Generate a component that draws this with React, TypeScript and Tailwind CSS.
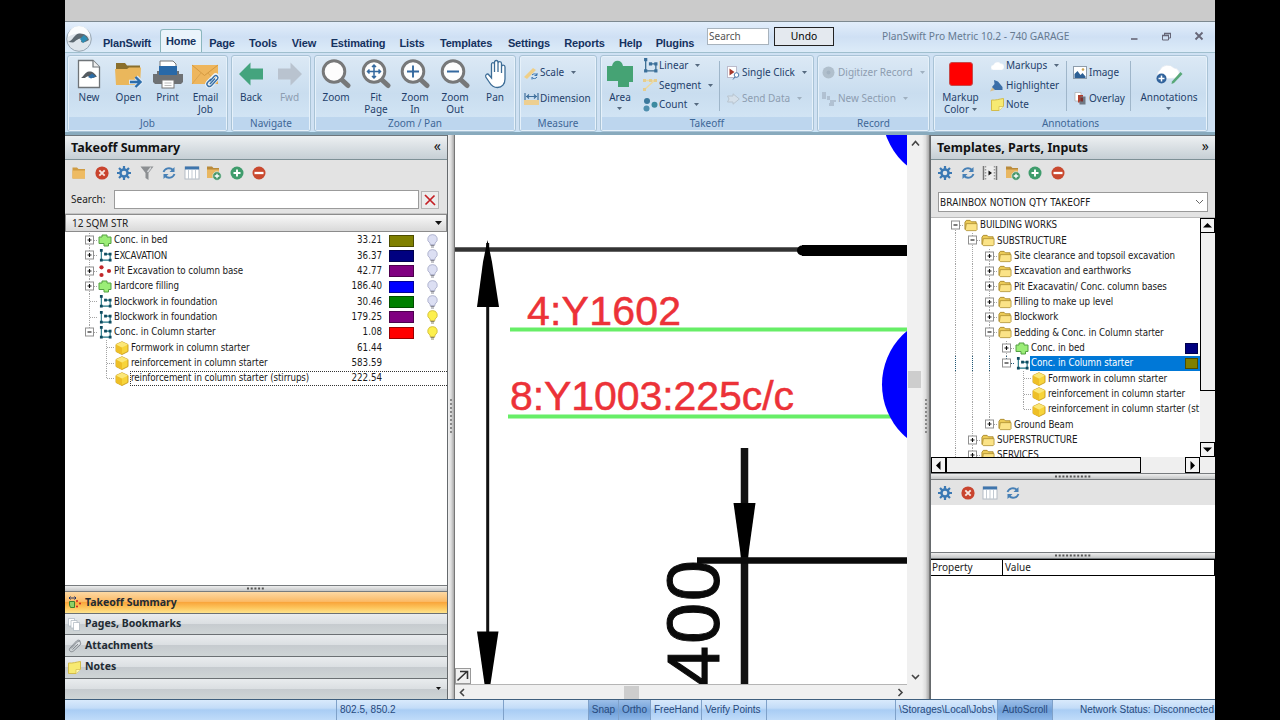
import React from 'react';

type Kids = { children?: React.ReactNode };

/* ---------- ribbon icons ---------- */

const NewIcon = () => (
  <svg width="24" height="30" viewBox="0 0 24 30">
    <path d="M1.500 1.500H16L22.500 8V28.500H1.500Z" fill="#fff" stroke="#6f7478" strokeWidth="1.300" />
    <path d="M16 1.500V8H22.500" fill="#eee" stroke="#6f7478" strokeWidth="1.200" />
    <path d="M4 19C7 17 8 13 12 12.500C16 12 18 15 20 17.500L16 19C13 16.500 10 17 8 19Z" fill="#555b60" />
    <path d="M11 18L15 14.500L19 17.500L14 19.500Z" fill="#2b6ca6" />
  </svg>
);
const OpenIcon = () => (
  <svg width="29" height="29" viewBox="0 0 29 29">
    <path d="M2 3H11L13 5.500H26V11H2Z" fill="#8a6f2c" />
    <path d="M1 9H13L15 7.500H27L26 25H2Z" fill="#eab75c" />
    <path d="M15 22H26M22 17L27 22L22 27" fill="none" stroke="#d8e6f4" strokeWidth="4.500" />
    <path d="M16 22H26M21.500 17L26.500 22L21.500 27" fill="none" stroke="#2c6dab" strokeWidth="2.400" />
  </svg>
);
const PrintIcon = () => (
  <svg width="30" height="29" viewBox="0 0 30 29">
    <path d="M7 1H20L23 4V12H7Z" fill="#fff" stroke="#777" />
    <path d="M0 14H30V22L28 24H2L0 22Z" fill="#6e7174" />
    <path d="M4 11H26V16H4Z" fill="#6e7174" />
    <rect x="6" y="6" width="18" height="9" fill="#2969a8" />
    <rect x="9" y="20" width="12" height="8" fill="#fff" stroke="#777" />
    <path d="M11.500 23H18.500M11.500 25.500H18.500" stroke="#bbb" />
  </svg>
);
const EmailIcon = () => (
  <svg width="29" height="29" viewBox="0 0 29 29">
    <rect x="1" y="5" width="26" height="19" fill="#eeb65d" />
    <path d="M1 5L13.500 15.500L27 5" fill="none" stroke="#d5993f" />
    <path d="M1 24L10 13M27 24L17 13" stroke="#dba450" />
    <path d="M18 21L23.500 15.500C25 14 28 16.500 26.500 18.500L20.500 25.500C18 28 14.500 25 16.500 22.500L22.500 16.500M19 24L24.500 18" fill="none" stroke="#edf4fa" strokeWidth="3.500" />
    <path d="M19 21L23.500 16C25.500 14.500 28 17 26.500 19L20.500 25.500C18 28 14.500 25 16.500 22.500L20 19M19 24L24 18.500" fill="none" stroke="#386fa5" strokeWidth="1.400" />
  </svg>
);
const ArrowIcon = ({ flip }: { flip?: boolean }) => (
  <svg width="26" height="24" viewBox="0 0 26 24">
    {flip ? <path d="M25 12L13.500 0.500V6.500H1V17.500H13.500V23.500Z" fill="#b9c3cf" /> : <path d="M1 12L12.500 0.500V6.500H25V17.500H12.500V23.500Z" fill="#44a47e" />}
  </svg>
);
const Magnifier = ({ children }: Kids) => (
  <svg width="30" height="30" viewBox="0 0 30 30">
    <path d="M20 20L27 26.500" stroke="#777879" strokeWidth="5" strokeLinecap="round" />
    <circle cx="13" cy="12.500" r="10.800" fill="#fdfdfd" stroke="#777879" strokeWidth="2.900" />
    <g stroke="#34699f" strokeWidth="1.900" fill="none">{children}</g>
  </svg>
);
const HandIcon = () => (
  <svg width="25" height="30" viewBox="0 0 25 30">
    <path d="M7.500 17V5.500C7.500 3 10.500 3 10.500 5.500V13V3.500C10.500 .800 14 .800 14 3.500V13V4.500C14 2 17.500 2 17.500 4.500V14V8C17.500 5.500 21 5.500 21 8V20C21 25 18 28.500 13.500 28.500C9.500 28.500 7.500 27 5.500 23.500L1.800 18C1 15.500 3.500 14 5 16L7.500 19Z" transform="translate(1)" fill="#fff" stroke="#3c6c96" strokeWidth="1.300" />
  </svg>
);
const AreaIcon = () => (
  <svg width="28" height="28" viewBox="0 0 28 28">
    <path d="M1 6H6C7 -1 16 -1 17 6H27V22H23V27H12V21H1Z" fill="#45a374" />
  </svg>
);
const ScaleIcon = () => (
  <svg width="15" height="14" viewBox="0 0 15 14">
    <path d="M0 11L9 2L12 4L3 13Z" fill="#efcf88" />
    <path d="M8 9C9 7.500 12 7.500 13 9M13 7V9.500H10.500M13 11C12 13 9 13 8 11.500M8 13.500V11" fill="none" stroke="#3a74ad" />
  </svg>
);
const DimIcon = () => (
  <svg width="15" height="14" viewBox="0 0 15 14">
    <rect x="0" y="8" width="15" height="5" fill="#edcf91" />
    <path d="M1 1V8M14 1V8M2 4.500H13M5 2.500L3 4.500L5 6.500M10 2.500L12 4.500L10 6.500" fill="none" stroke="#3e6f9b" strokeWidth="1.200" />
  </svg>
);
const LinearIcon = ({ small }: { small?: boolean }) => (
  <svg width={small ? 13 : 15} height={small ? 13 : 15} viewBox="0 0 14 14">
    <path d="M2.500 1.500V12H12V5.500H7" fill="none" stroke={small ? '#1f7585' : '#3b6d92'} strokeWidth="1.200" />
    <g fill={small ? '#0f4c60' : '#3a6f9a'}>
      <rect x="1" y="0" width="3" height="3" /><rect x="1" y="10.500" width="3" height="3" /><rect x="10.500" y="10.500" width="3" height="3" /><rect x="10.500" y="4" width="3" height="3" /><rect x="5.500" y="4" width="3" height="3" />
    </g>
  </svg>
);
const SegmentIcon = () => (
  <svg width="15" height="14" viewBox="0 0 15 14">
    <path d="M1 2.500H12.500M1 12L12 2" fill="none" stroke="#ecd9a1" strokeWidth="1.600" />
    <path d="M0 1H3V4H0ZM6 1H9V4H6ZM11 1H14V4H11ZM0 10H3V13H0Z" fill="#e6cd8e" />
  </svg>
);
const CountIcon = () => (
  <svg width="15" height="14" viewBox="0 0 15 14">
    <circle cx="4" cy="3" r="3" fill="#3b789c" /><circle cx="3.500" cy="10.500" r="3" fill="#4f8fae" /><circle cx="11.500" cy="6.800" r="3" fill="#3c8aa0" />
  </svg>
);
const ClickIcon = () => (
  <svg width="13" height="14" viewBox="0 0 13 14">
    <rect x=".5" y=".5" width="9" height="11" fill="#fff" stroke="#bbc" />
    <path d="M2.500 2.500L7.500 6L2.500 9.500Z" fill="#a6392c" />
    <circle cx="9.500" cy="9" r="2.300" fill="#fff" stroke="#4b7aab" /><path d="M8 11L6 13.500" stroke="#4b7aab" />
  </svg>
);
const SendIcon = () => (
  <svg width="13" height="12" viewBox="0 0 13 12"><path d="M.5 3H6V.800L12.300 6L6 11.200V9H.500L2 6Z" fill="#d5e0ea" stroke="#b8c4cf" /></svg>
);
const DigitIcon = () => (
  <svg width="14" height="13" viewBox="0 0 14 13"><circle cx="6.500" cy="6.500" r="6" fill="#b0bfcc" /><circle cx="6.500" cy="6.500" r="2" fill="#a3b3c2" /></svg>
);
const SectionIcon = () => (
  <svg width="14" height="14" viewBox="0 0 14 14"><path d="M0 0H4V7H0ZM5 4H8V8H5ZM8 8H14V10H12V14H7V11H8Z" fill="#b1c1d2" /></svg>
);
const CloudIcon = () => (
  <svg width="13" height="9" viewBox="0 0 13 9"><path d="M2.500 9A2.500 2.500 0 0 1 2.500 4A4 3.800 0 0 1 9.500 2.500A3.300 3.300 0 0 1 10.500 9Z" fill="#fff" stroke="#e9eef4" strokeWidth=".5" /></svg>
);
const HighlightIcon = () => (
  <svg width="14" height="13" viewBox="0 0 14 13"><path d="M0 12.500L2.500 8L5 11Z" fill="#d9c08e" /><path d="M4 1L8 2.500L12.500 8V11H5L2 8L4.500 5Z" fill="#3c6fa8" /></svg>
);
const NoteIcon = () => (
  <svg width="13" height="13" viewBox="0 0 13 13"><path d="M.5 2C5 2.500 8 1 12.500 .500V8L8 12.500H.500Z" fill="#f7ea72" stroke="#d3bc4b" /><path d="M8 12.500V8.500H12.500" fill="#fdf7b6" stroke="#d3bc4b" strokeWidth=".7" /></svg>
);
const ImageIcon = () => (
  <svg width="14" height="13" viewBox="0 0 14 13"><rect x=".5" y=".5" width="13" height="12" fill="#fff" stroke="#8d9cab" /><path d="M1.500 12V8L4.500 5L7.500 9L9.500 7L12.500 10.500V12Z" fill="#2d6095" /><circle cx="10" cy="3.500" r="1.300" fill="#c9a251" /></svg>
);
const OverlayIcon = () => (
  <svg width="13" height="13" viewBox="0 0 13 13"><path d="M1 .500H7V9H1Z" fill="#fff" stroke="#aaa" strokeWidth=".7" /><rect x="4" y="3" width="5" height="7.500" fill="#b2402e" /><path d="M6.500 4.500H11.500V12.500H5.500V9H6.500Z" fill="#6f7985" /><rect x="6.500" y="5.500" width="2.500" height="4" fill="#7d2f2d" /></svg>
);
const AnnoIcon = () => (
  <svg width="28" height="22" viewBox="0 0 28 22">
    <path d="M6 16A5 5 0 0 1 5 7A8 7 0 0 1 19 5A5.500 5.500 0 0 1 22 15Z" fill="#fff" stroke="#dfe7ef" strokeWidth=".7" />
    <circle cx="6.500" cy="15.500" r="5" fill="#31639c" /><path d="M3.500 15.500H9.500M6.500 12.500V18.500" stroke="#fff" strokeWidth="1.500" />
    <path d="M25.500 9L27.500 11L19 20L16.500 21L17 18.500Z" fill="#58a878" />
  </svg>
);

/* ---------- toolbar icons (16px) ---------- */

const Bar = ({ children }: Kids) => <svg width="16" height="16" viewBox="0 0 16 16">{children}</svg>;
const TbFolder = () => <Bar><path d="M1.500 2.500H6L7.500 4H14V13.500H1.500Z" fill="#d09c43" /><path d="M1.500 5.500H14V13.500H1.500Z" fill="#eebb63" /></Bar>;
const TbX = () => <Bar><circle cx="8" cy="8" r="6.600" fill="#c9442e" /><path d="M5.300 5.300L10.700 10.700M10.700 5.300L5.300 10.700" stroke="#f6e6e0" strokeWidth="1.900" /></Bar>;
const TbGear = () => <Bar><g stroke="#3b79b4" strokeWidth="2.200"><path d="M8 1V15M1 8H15M3 3L13 13M13 3L3 13" /></g><circle cx="8" cy="8" r="4.800" fill="#3b79b4" /><circle cx="8" cy="8" r="2.300" fill="#e3e6ea" /></Bar>;
const TbFilter = () => <Bar><path d="M1.500 1.500H14.500L9.500 8V15L6.500 13V8Z" fill="#8c8f92" /><path d="M12 2.500L8.500 7" stroke="#d6d8da" strokeWidth="1.500" /></Bar>;
const TbRefresh = () => <Bar><path d="M2.500 7C4 3 9 2 12 5M13.500 9C12 13 7 14 4 11" fill="none" stroke="#4780b6" strokeWidth="1.900" /><path d="M13.500 2V7H8.500ZM2.500 14V9H7.500Z" fill="#4780b6" /></Bar>;
const TbTable = () => <Bar><rect x="1" y="2" width="14" height="12" fill="#fff" stroke="#b4bcc5" /><rect x="1" y="1.500" width="14" height="3" fill="#3f75ac" /><path d="M4.500 5V14M8 5V14M11.500 5V14" stroke="#c3cbd3" /></Bar>;
const TbFolderAdd = () => <Bar><path d="M1 1.500H6L7.500 3H13V13H1Z" fill="#b98a3a" /><path d="M1 4.500H13V13H1Z" fill="#e9b761" /><circle cx="11" cy="11" r="4.300" fill="#46966a" stroke="#e0ebe4" strokeWidth=".7" /><path d="M8.700 11H13.300M11 8.700V13.300" stroke="#fff" strokeWidth="1.300" /></Bar>;
const TbPlus = () => <Bar><circle cx="8" cy="8" r="6.500" fill="#3f9c6c" /><path d="M4.500 8H11.500M8 4.500V11.500" stroke="#fff" strokeWidth="1.900" /></Bar>;
const TbMinus = () => <Bar><circle cx="8" cy="8" r="6.500" fill="#c9492f" /><path d="M3.500 8H12.500" stroke="#fff" strokeWidth="2.300" /></Bar>;
const TbFilm = () => <Bar><rect x="1" y="1" width="14" height="14" fill="#ececec" /><path d="M1.500 1V15M14.500 1V15" stroke="#777" strokeWidth="1.500" /><path d="M3.500 1V15M12.500 1V15" stroke="#999" strokeWidth="1.500" strokeDasharray="1.500 1.500" /><path d="M6.500 5.500L10 8L6.500 10.500Z" fill="#111" /></Bar>;

/* ---------- tree icons ---------- */

const TreeArea = () => <svg width="14" height="13" viewBox="0 0 14 13"><path d="M1 3H4V1H9V3H13V9.500H10.500V12H6V9.500H1Z" fill="#9bed77" stroke="#55a043" /></svg>;
const TreeCount = () => <svg width="14" height="13" viewBox="0 0 14 13"><g fill="#c1272a"><circle cx="3.500" cy="2.300" r="2.100" /><circle cx="3.500" cy="10" r="2.100" /><circle cx="11" cy="6" r="2.100" /></g></svg>;
const TreeBox = () => <svg width="14" height="14" viewBox="0 0 14 14"><path d="M7 .700L13 3.500V10.500L7 13.500L1 10.500V3.500Z" fill="#f7d43a" stroke="#c69a1c" strokeWidth=".9" /><path d="M1 3.500L7 6.500V13.500L1 10.500Z" fill="#eebf26" /><path d="M7 .700L13 3.500L7 6.500L1 3.500Z" fill="#fbe778" /></svg>;
const TreeFolder = () => <svg width="15" height="13" viewBox="0 0 15 13"><path d="M1 10.500V3L2.500 1H6.500L8 2.500H13V10.500Z" fill="#eccb58" stroke="#a48324" strokeWidth=".9" /><path d="M2.500 4.500H14V11L13 12H2.500L1.500 11Z" fill="#fbe387" stroke="#a98a2d" strokeWidth=".8" /></svg>;
const Bulb = ({ on }: { on?: boolean }) => (
  <svg width="11" height="14" viewBox="0 0 11 14">
    <path d="M5.500 .600A4.500 4.500 0 0 1 8 9V10.500H3V9A4.500 4.500 0 0 1 5.500 .600Z" fill={on ? '#fdf04d' : '#dcdff3'} stroke={on ? '#cdb83a' : '#a6a9c6'} strokeWidth=".8" />
    <path d="M3.500 11.500H7.500M4 13H7" stroke={on ? '#8f8a63' : '#8a8b96'} />
  </svg>
);
const treeIcon = { area: <TreeArea />, linear: <LinearIcon small />, count: <TreeCount />, box: <TreeBox />, folder: <TreeFolder /> };

/* Slots: | guide line, blank, + collapsed, p last collapsed, - expanded, e last expanded, ^ expanded root, t branch, l last branch */
const Slot = ({ k, dark }: { k: string; dark?: boolean }) => {
  const s = dark ? '#1c5573' : '#a3a3a3';
  const boxed = '+p-e^'.includes(k);
  return (
    <svg width="17" height="15.333" viewBox="0 0 17 15.333" className="shrink-0">
      {k !== ' ' && k !== '^' && <path d={'lep'.includes(k) ? 'M8.500 0V8' : 'M8.500 0V15.300'} stroke={s} strokeDasharray="1 1" />}
      {k === '^' && <path d="M8.500 8V15.300" stroke={s} strokeDasharray="1 1" />}
      {k !== ' ' && k !== '|' && <path d="M9 7.500H17" stroke={s} strokeDasharray="1 1" />}
      {boxed && (
        <>
          <rect x="4.500" y="3" width="8" height="8" fill="#fff" stroke="#909090" />
          <path d={k === '+' || k === 'p' ? 'M6.500 7H10.500M8.500 5V9' : 'M6.500 7H10.500'} stroke="#111" strokeWidth="1.100" />
        </>
      )}
    </svg>
  );
};

type Node = { s: string; i: keyof typeof treeIcon; t: string; v?: string; c?: string; on?: boolean; sel?: boolean };
const leftTree: Node[] = [
  { s: '+', i: 'area', t: 'Conc. in bed', v: '33.21', c: 'bg-[#808000]' },
  { s: '+', i: 'linear', t: 'EXCAVATION', v: '36.37', c: 'bg-[#000080]' },
  { s: '+', i: 'count', t: 'Pit Excavation to column base', v: '42.77', c: 'bg-[#800080]' },
  { s: '+', i: 'area', t: 'Hardcore filling', v: '186.40', c: 'bg-[#0000ff]' },
  { s: 't', i: 'linear', t: 'Blockwork in foundation', v: '30.46', c: 'bg-[#008000]' },
  { s: 't', i: 'linear', t: 'Blockwork in foundation', v: '179.25', c: 'bg-[#800080]', on: true },
  { s: 'e', i: 'linear', t: 'Conc. in Column starter', v: '1.08', c: 'bg-[#ff0000]', on: true },
  { s: ' t', i: 'box', t: 'Formwork in column starter', v: '61.44' },
  { s: ' t', i: 'box', t: 'reinforcement in column starter', v: '583.59' },
  { s: ' l', i: 'box', t: 'reinforcement in column starter (stirrups)', v: '222.54', sel: true },
];
const rightTree: Node[] = [
  { s: '^', i: 'folder', t: 'BUILDING WORKS' },
  { s: '|-', i: 'folder', t: 'SUBSTRUCTURE' },
  { s: '||+', i: 'folder', t: 'Site clearance and topsoil excavation' },
  { s: '||+', i: 'folder', t: 'Excavation and earthworks' },
  { s: '||+', i: 'folder', t: 'Pit Exacavatin/ Conc. column bases' },
  { s: '||+', i: 'folder', t: 'Filling to make up level' },
  { s: '||+', i: 'folder', t: 'Blockwork' },
  { s: '||-', i: 'folder', t: 'Bedding & Conc. in Column starter' },
  { s: '|||+', i: 'area', t: 'Conc. in bed', c: 'bg-[#000080]' },
  { s: '|||e', i: 'linear', t: 'Conc. in Column starter', c: 'bg-[#808000]', sel: true },
  { s: '||| t', i: 'box', t: 'Formwork in column starter' },
  { s: '||| t', i: 'box', t: 'reinforcement in column starter' },
  { s: '||| l', i: 'box', t: 'reinforcement in column starter (st' },
  { s: '||p', i: 'folder', t: 'Ground Beam' },
  { s: '|+', i: 'folder', t: 'SUPERSTRUCTURE' },
  { s: '|+', i: 'folder', t: 'SERVICES' },
];

/* ---------- ribbon building blocks ---------- */

const Drop = ({ dim }: { dim?: boolean }) => (
  <svg width="5" height="3" viewBox="0 0 5 3" className="shrink-0"><path d="M0 0H5L2.500 3Z" fill={dim ? '#9fb0c0' : '#55697f'} /></svg>
);
const Group = ({ label, w, children }: Kids & { label: string; w: string }) => (
  <section className={`${w} mr-[3px] flex h-[77px] shrink-0 flex-col overflow-hidden rounded-[3px] border border-[#a9c3d6] bg-gradient-to-b from-[#dce9f5] via-[#c9ddef] to-[#d6e8f7] shadow-[inset_0_0_0_1px_#e6f1fa]`}>
    <div className="flex h-[61px] shrink-0">{children}</div>
    <div className="mx-px mb-px flex h-[13px] items-center justify-center bg-[#bdd6ee] text-[#3d6797]">{label}</div>
  </section>
);
const Big = ({ w, icon, label, dim, drop }: { w: string; icon: React.ReactNode; label: string[]; dim?: boolean; drop?: boolean }) => (
  <div className={`${w} flex shrink-0 flex-col items-center ${dim ? 'text-[#8d9db0]' : ''}`}>
    <div className="flex h-[36px] items-center justify-center">{icon}</div>
    <div className="flex flex-col items-center whitespace-nowrap leading-[11.500px]">
      {label.map((l, n) => (
        <span key={l} className="flex items-center gap-[3px]">{l}{drop && n === label.length - 1 && n > 0 && <Drop />}</span>
      ))}
      {drop && label.length === 1 && <span className="pt-[3px]"><Drop /></span>}
    </div>
  </div>
);
const Small = ({ icon, label, dim, drop }: { icon: React.ReactNode; label: string; dim?: boolean; drop?: boolean }) => (
  <div className={`flex h-[15px] items-center whitespace-nowrap ${dim ? 'text-[#8d9db0]' : ''}`}>
    <span className="flex w-[16px] shrink-0 items-center justify-center">{icon}</span>
    <span className="mr-[7px] ml-px">{label}</span>
    {drop && <Drop dim={dim} />}
  </div>
);
const Rule = ({ m }: { m: string }) => <div className={`${m} mt-[5px] h-[50px] w-px shrink-0 bg-[#9fb6ca]`} />;

const tabs: [string, string][] = [
  ['Page', 'w-[40px]'], ['Tools', 'w-[42px]'], ['View', 'w-[40px]'], ['Estimating', 'w-[68px]'], ['Lists', 'w-[40px]'], ['Templates', 'w-[68px]'],
  ['Settings', 'w-[58px]'], ['Reports', 'w-[53px]'], ['Help', 'w-[39px]'], ['Plugins', 'w-[50px]'],
];

const TitleBar = () => (
  <header className="flex h-[30px] shrink-0 bg-gradient-to-b from-[#e2eefb] via-[#cfe0f4] to-[#dcebf8]">
    <svg width="28" height="30" viewBox="0 0 28 30" className="mr-px shrink-0">
      <circle cx="14" cy="17" r="12.300" fill="#dfe6ec" stroke="#98a7b4" />
      <path d="M3 15A11 11 0 0 1 25 15C18 10 9 11 3 15Z" fill="#fafcfd" />
      <path d="M3 20C8 19 9 12 14 11.500C19 11 23 14 24 18C21 20 18 21 16 20L17 17C14 15 10 20 8 20.500Z" fill="#5d6971" />
      <path d="M15 17L19 13L23 17L18 21Z" fill="#2d8cb4" />
    </svg>
    <nav className="flex font-['Liberation_Sans',sans-serif] text-[11px] font-bold tracking-[-0.150px] text-[#15325f]">
      <span className="flex w-[66px] items-end justify-center pb-px">PlanSwift</span>
      <span className="mt-[7px] flex w-[42px] items-center justify-center rounded-t-[3px] border border-b-0 border-[#8bb6bd] bg-[#eaf4fb]">Home</span>
      {tabs.map(([t, w]) => <span key={t} className={`${w} flex items-end justify-center pb-px`}>{t}</span>)}
    </nav>
    <div className="mt-[6px] ml-[7px] flex h-[17px] w-[62px] items-center border border-[#a8b3bd] bg-white pl-px text-[#555]">Search</div>
    <div className="mt-[5px] ml-[5px] flex h-[19px] w-[60px] items-center justify-center border border-[#222] bg-[#e4e9ef] text-[10.300px] text-black">Undo</div>
    <div className="mt-[7px] ml-[48px] w-[196px] text-[10.200px] leading-[15px] whitespace-nowrap text-[#667a91]">PlanSwift Pro Metric 10.2 - 740 GARAGE</div>
    <svg width="84" height="30" viewBox="0 0 84 30" className="ml-[48px]">
      <path d="M5 17H11.500" stroke="#667" strokeWidth="1.600" />
      <path d="M36.500 13.500H42.500V18H36.500ZM38.500 13V11.500H44.500V16H43" fill="none" stroke="#667" /><path d="M36 13.500H43M38 11.500H45" stroke="#667" strokeWidth="1.500" />
      <path d="M69.500 10.500L76.500 17.500M76.500 10.500L69.500 17.500" stroke="#667" strokeWidth="1.800" />
    </svg>
  </header>
);

const Ribbon = () => (
  <div className="flex h-[83px] shrink-0 border-t border-b-[3px] border-t-[#9fbfce] border-b-[#88aabd] bg-[#cfe1f3] pt-[2px] pl-[2px] text-[#1f3f6b] shadow-[inset_0_-1px_0_#c8e5f8]">
    <Group label="Job" w="w-[161px]">
      <Big w="w-[42px]" icon={<NewIcon />} label={['New']} />
      <Big w="w-[37px]" icon={<OpenIcon />} label={['Open']} />
      <Big w="w-[41px]" icon={<PrintIcon />} label={['Print']} />
      <Big w="w-[35px]" icon={<EmailIcon />} label={['Email', 'Job']} />
    </Group>
    <Group label="Navigate" w="w-[80px]">
      <Big w="w-[38px]" icon={<ArrowIcon />} label={['Back']} />
      <Big w="w-[39px]" icon={<ArrowIcon flip />} label={['Fwd']} dim />
    </Group>
    <Group label="Zoom / Pan" w="w-[202px]">
      <Big w="w-[42px]" icon={<Magnifier />} label={['Zoom']} />
      <Big w="w-[38px]" icon={<Magnifier><path d="M6.500 12.500H19.500M13 6V19M8.500 10.500L6.500 12.500L8.500 14.500M17.500 10.500L19.500 12.500L17.500 14.500M11 8L13 6L15 8M11 17L13 19L15 17" strokeWidth="1.500" /></Magnifier>} label={['Fit', 'Page']} />
      <Big w="w-[40px]" icon={<Magnifier><path d="M7 12.500H19M13 6.500V18.500" /></Magnifier>} label={['Zoom', 'In']} />
      <Big w="w-[40px]" icon={<Magnifier><path d="M7 12.500H19" /></Magnifier>} label={['Zoom', 'Out']} />
      <Big w="w-[40px]" icon={<HandIcon />} label={['Pan']} />
    </Group>
    <Group label="Measure" w="w-[78px]">
      <div className="flex flex-col gap-[11px] pt-[9px] pl-[3px]">
        <Small icon={<ScaleIcon />} label="Scale" drop />
        <Small icon={<DimIcon />} label="Dimension" />
      </div>
    </Group>
    <Group label="Takeoff" w="w-[214px]">
      <Big w="w-[38px]" icon={<AreaIcon />} label={['Area']} drop />
      <div className="ml-[2px] flex w-[74px] flex-col gap-[4.500px] pt-[2px] pl-px">
        <Small icon={<LinearIcon />} label="Linear" drop />
        <Small icon={<SegmentIcon />} label="Segment" drop />
        <Small icon={<CountIcon />} label="Count" drop />
      </div>
      <Rule m="ml-[4px]" />
      <div className="flex flex-col gap-[11px] pt-[9px] pl-[5px]">
        <Small icon={<ClickIcon />} label="Single Click" drop />
        <Small icon={<SendIcon />} label="Send Data" dim drop />
      </div>
    </Group>
    <Group label="Record" w="w-[113px]">
      <div className="flex flex-col gap-[11px] pt-[9px] pl-[3px]">
        <Small icon={<DigitIcon />} label="Digitizer Record" dim drop />
        <Small icon={<SectionIcon />} label="New Section" dim drop />
      </div>
    </Group>
    <Group label="Annotations" w="w-[275px]">
      <Big w="w-[53px]" icon={<div className="size-[24px] rounded-[3px] border border-[#c54b4b] bg-[#ff0000]" />} label={['Markup', 'Color']} drop />
      <div className="flex w-[79px] flex-col gap-[4.500px] pt-[2px] pl-[2px]">
        <Small icon={<CloudIcon />} label="Markups" drop />
        <Small icon={<HighlightIcon />} label="Highlighter" />
        <Small icon={<NoteIcon />} label="Note" />
      </div>
      <Rule m="ml-0" />
      <div className="flex w-[61px] flex-col gap-[11px] pt-[9px] pl-[5px]">
        <Small icon={<ImageIcon />} label="Image" />
        <Small icon={<OverlayIcon />} label="Overlay" />
      </div>
      <Rule m="ml-[2px]" />
      <Big w="w-[76px]" icon={<AnnoIcon />} label={['Annotations']} drop />
    </Group>
  </div>
);

/* ---------- panels ---------- */

const PanelHead = ({ title, mark }: { title: string; mark: string }) => (
  <div className="flex h-[25px] shrink-0 items-center justify-between border-t border-b border-t-[#6d757b] border-b-[#7e9096] bg-gradient-to-b from-[#edf0f2] to-[#c6cfd5] px-[6px] pt-px text-[#111]">
    <h2 className="font-['Noto_Sans',sans-serif] text-[12.500px] font-bold whitespace-nowrap">{title}</h2>
    <span className="pb-[4px] text-[14px] leading-none">{mark}</span>
  </div>
);
const Grip = ({ small }: { small?: boolean }) => (
  <div className="flex h-[7px] shrink-0 items-center justify-center border-t border-b border-[#777b7e] bg-gradient-to-b from-[#eee] to-[#c4c6c7]">
    <svg width={small ? 18 : 37} height="3" viewBox={small ? '0 0 18 3' : '0 0 37 3'}><path d="M0 1.500H37" stroke="#555" strokeWidth="2" strokeDasharray="2 1.700" /></svg>
  </div>
);

const navItems: [string, React.ReactNode, string][] = [
  ['Takeoff Summary', <svg width="13" height="13" viewBox="0 0 13 13" key="a"><path d="M1 2H8M2.500 .500L1 2L2.500 3.500M6.500 .500L8 2L6.500 3.500" fill="none" stroke="#236" /><path d="M1.500 5.500H6.500V11.500H2.500L1.500 9Z" fill="#8ed067" stroke="#3b8130" /><circle cx="9" cy="5" r="1" fill="#c22" /><circle cx="12" cy="7.500" r="1" fill="#c22" /><circle cx="9" cy="10.500" r="1" fill="#c22" /></svg>, 'bg-[linear-gradient(#fdd9a4_0%,#fbba66_45%,#f9a63c_50%,#fdc55c_75%,#fee38c_100%)]'],
  ['Pages, Bookmarks', <svg width="13" height="13" viewBox="0 0 13 13" key="b"><path d="M.5 .500H6.500V8H.500Z" fill="#fff" stroke="#aab4bd" strokeWidth=".7" /><path d="M3 2.500H9V10H3Z" fill="#fff" stroke="#aab4bd" strokeWidth=".7" /><path d="M5.500 4.500H11.500V12.500H5.500Z" fill="#fff" stroke="#aab4bd" strokeWidth=".7" /></svg>, ''],
  ['Attachments', <svg width="14" height="14" viewBox="0 0 14 14" key="c"><path d="M3 9.500L9 3.200C11 1.200 14 3.500 12 6L5.500 12C3 14 0 11.500 2 9L8.500 2C10 .700 12 1 12.500 2.500M4.500 10.500L10 5" fill="none" stroke="#858b91" /></svg>, ''],
  ['Notes', <NoteIcon key="d" />, ''],
];

const LeftPanel = () => (
  <aside className="flex w-[383px] shrink-0 flex-col overflow-hidden border-r border-[#666a6d] bg-[#e3e3e3]">
    <PanelHead title="Takeoff Summary" mark="«" />
    <div className="flex h-[26px] shrink-0 items-center gap-[6.500px] pl-[6px]">
      <TbFolder /><TbX /><TbGear /><TbFilter /><TbRefresh /><TbTable /><TbFolderAdd /><TbPlus /><TbMinus />
    </div>
    <div className="flex h-[28px] shrink-0 items-center border-b border-[#c5c5c5] pl-[6px]">
      <span className="w-[43px] text-[10px] text-[#222]">Search:</span>
      <div className="h-[19px] w-[305px] border border-[#9b9b9b] bg-white" />
      <div className="ml-[2px] flex h-[18px] w-[18px] items-center justify-center border border-[#b5b5b5] bg-[#ececec]">
        <svg width="12" height="12" viewBox="0 0 12 12"><path d="M1 1L11 11M10.500 1.500L1.500 10.500" stroke="#c41f24" strokeWidth="1.700" /></svg>
      </div>
    </div>
    <div className="flex h-[18px] shrink-0 items-center justify-between border border-[#8b8b8b] bg-gradient-to-b from-[#f8f8f8] to-[#d9d9d9] pr-[4px] pl-[6px] text-[10px] text-[#222]">
      12 SQM STR
      <svg width="7" height="4" viewBox="0 0 7 4"><path d="M0 0H7L3.500 4Z" fill="#111" /></svg>
    </div>
    <div className="flex-1 overflow-hidden bg-white pt-px font-['DejaVu_Sans_Condensed','DejaVu_Sans',sans-serif] text-[9.700px] text-[#1a1a1a] [font-stretch:condensed]">
      {leftTree.map((n, k) => (
        <div key={k} className="flex h-[15.333px] items-center pl-[16px]">
          {n.s.split('').map((c, j) => <Slot key={j} k={c} />)}
          <span className="flex w-[14px] shrink-0 justify-center">{treeIcon[n.i]}</span>
          <div className={`ml-px flex h-[15px] flex-1 items-center border border-r-0 ${n.sel ? 'border-dotted border-[#333]' : 'border-transparent'}`}>
            <span className="flex-1 whitespace-nowrap tracking-[-0.080px]">{n.t}</span>
            <span>{n.v}</span>
            <span className="ml-[7px] h-[12px] w-[25px] shrink-0">{n.c && <span className={`${n.c} block h-full w-full border border-black/40`} />}</span>
            <span className="flex w-[33px] shrink-0 justify-center pl-[3px]">{n.c && <Bulb on={n.on} />}</span>
          </div>
        </div>
      ))}
    </div>
    <Grip small />
    {navItems.map(([t, icon, bg]) => (
      <div key={t} className={`flex h-[21.600px] shrink-0 items-center border-b border-[#6b7073] pl-[3px] text-[10.500px] font-bold text-[#222b33] ${bg || 'bg-[linear-gradient(#e9ecee_0%,#dbdfe2_48%,#c6cbcf_50%,#cfd5d6_100%)]'}`}>
        <span className="flex w-[17px] shrink-0">{icon}</span>{t}
      </div>
    ))}
    <div className="flex h-[20.500px] shrink-0 items-center justify-end bg-[linear-gradient(#e9ecee_0%,#dbdfe2_48%,#c6cbcf_50%,#cfd5d6_100%)] pr-[6px]">
      <svg width="5" height="3" viewBox="0 0 5 3"><path d="M0 0H5L2.500 3Z" fill="#111" /></svg>
    </div>
  </aside>
);

const Splitter = ({ w }: { w: string }) => (
  <div className={`${w} flex shrink-0 items-center justify-center border-r border-[#777] bg-gradient-to-r from-[#f0f0f0] via-[#dedede] to-[#a9a9a9]`}>
    <svg width="4" height="36" viewBox="0 0 4 36"><path d="M2 0V36" stroke="#888" strokeWidth="2" strokeDasharray="2 2" /></svg>
  </div>
);

const Chevron = ({ d }: { d: string }) => <svg width="14" height="14" viewBox="0 0 14 14" className="shrink-0"><path d={d} fill="none" stroke="#444" strokeWidth="1.600" /></svg>;

const Canvas = () => (
  <main className="flex w-[467px] shrink-0 flex-col bg-[#f0f0f0]">
    <div className="flex h-[549px]">
      <svg width="452" height="549" viewBox="455 135 452 549" className="shrink-0 bg-white">
        <path d="M455 249.500H801" stroke="#333" strokeWidth="4.500" />
        <path d="M802 250.500H907" stroke="#000" strokeWidth="11" />
        <circle cx="802" cy="250.500" r="5" />
        <path d="M487.700 243V684" stroke="#111" strokeWidth="3" />
        <path d="M487.500 240L492 262L499 307H477L483 262Z" />
        <path d="M477 631.500H498.500L490.500 684H484.500Z" />
        <path d="M510 329.500H907M508 416.500H892" stroke="#67ee67" strokeWidth="4" />
        <circle cx="952" cy="384.500" r="70" fill="#0000ff" />
        <circle cx="952" cy="112" r="70" fill="#0000ff" />
        <g fill="#ec3238" stroke="#ec3238" strokeWidth=".5" fontFamily="Liberation Sans, sans-serif" fontSize="41">
          <text x="527" y="325" textLength="154">4:Y1602</text>
          <text x="510" y="410" textLength="284">8:Y1003:225c/c</text>
        </g>
        <path d="M744.500 448V684" stroke="#111" strokeWidth="7.500" />
        <path d="M733.500 503H755.500L748 557H741Z" />
        <path d="M697 560.500H907" stroke="#0a0a0a" strokeWidth="6.500" />
        <text transform="translate(718.500 687) rotate(-90)" fontFamily="Liberation Sans, sans-serif" fontSize="74" textLength="127" fill="#0a0a0a" stroke="#0a0a0a" strokeWidth="1">400</text>
        <rect x="455.500" y="668.500" width="15" height="15" fill="#f0f0f0" stroke="#999" />
        <path d="M457.500 680.500L467 671.500M460 671.500H467.500V679" fill="none" stroke="#333" strokeWidth="1.600" />
      </svg>
      <div className="flex w-[15px] flex-col items-center justify-between">
        <Chevron d="M4 10.500L7.500 6.500L11 10.500" />
        <div className="mb-[60px] h-[17px] w-[13px] bg-[#cdcdcd]" />
        <Chevron d="M4 5L7.500 8.500L11 5" />
      </div>
    </div>
    <div className="flex h-[15px] w-[452px] items-center border-t border-[#b5b5b5]">
      <Chevron d="M9 4L5.500 7.500L9 11" />
      <div className="ml-[155px] h-[13px] w-[15px] bg-[#cdcdcd]" />
      <div className="ml-auto"><Chevron d="M5.500 4L9 7.500L5.500 11" /></div>
    </div>
  </main>
);

const ArrowBtn = ({ d, c }: { d: string; c: string }) => (
  <div className={`${c} flex shrink-0 items-center justify-center border border-black bg-[#f4f4f4]`}>
    <svg width="9" height="9" viewBox="0 0 9 9"><path d={d} fill="#000" /></svg>
  </div>
);

const RightPanel = () => (
  <aside className="flex min-w-0 flex-1 flex-col overflow-hidden border-l border-[#666a6d] bg-[#e3e3e3]">
    <PanelHead title="Templates, Parts, Inputs" mark="»" />
    <div className="flex h-[26px] shrink-0 items-center gap-[6.500px] pl-[6px]">
      <TbGear /><TbRefresh /><TbFilm /><TbFolderAdd /><TbPlus /><TbMinus />
    </div>
    <div className="mx-[7px] mt-[6px] mb-[5px] flex h-[20px] shrink-0 items-center justify-between border border-[#999] bg-white pr-[3px] pl-px font-['DejaVu_Sans_Condensed','DejaVu_Sans',sans-serif] text-[10px] tracking-[0.080px] text-[#1a1a1a] [font-stretch:condensed]">
      BRAINBOX NOTION QTY TAKEOFF
      <svg width="9" height="6" viewBox="0 0 9 6"><path d="M1 1L4.500 4.500L8 1" fill="none" stroke="#666" /></svg>
    </div>
    <div className="flex h-[240px] shrink-0 border-t border-[#b9b9b9] bg-white">
      <div className="w-[269px] shrink-0 overflow-hidden font-['DejaVu_Sans_Condensed','DejaVu_Sans',sans-serif] text-[9.700px] text-[#1a1a1a] [font-stretch:condensed]">
        {rightTree.map((n, k) => (
          <div key={k} className="flex h-[15.333px] items-center pl-[16px]">
            {n.s.split('').map((c, j) => <Slot key={j} k={c} dark={n.sel} />)}
            <span className="flex w-[14px] shrink-0 justify-center">{treeIcon[n.i]}</span>
            <div className={`ml-px flex h-full min-w-0 flex-1 items-center pl-px ${n.sel ? 'bg-[#0078d7] text-white' : ''}`}>
              <span className="flex-1 whitespace-nowrap tracking-[-0.060px]">{n.t}</span>
              {n.c && <span className={`${n.c} mr-[2px] h-[11px] w-[13px] shrink-0 border border-black/40`} />}
            </div>
          </div>
        ))}
      </div>
      <div className="flex flex-1 flex-col bg-[#f0f0f0]">
        <ArrowBtn c="h-[15px]" d="M0 6.500L4.500 2L9 6.500Z" />
        <div className="h-[158px] border border-t-0 border-r-0 border-black" />
        <ArrowBtn c="mt-auto h-[15px]" d="M0 2.500L4.500 7L9 2.500Z" />
      </div>
    </div>
    <div className="flex h-[16px] shrink-0 bg-[#efefef]">
      <ArrowBtn c="w-[15px]" d="M6.500 0L2 4.500L6.500 9Z" />
      <div className="w-[195px] border border-black" />
      <ArrowBtn c="ml-[44px] w-[15px]" d="M2.500 0L7 4.500L2.500 9Z" />
    </div>
    <Grip />
    <div className="flex h-[25px] shrink-0 items-center gap-[6.500px] pl-[6px]">
      <TbGear /><TbX /><TbTable /><TbRefresh />
    </div>
    <div className="h-[47px] shrink-0 bg-white" />
    <Grip />
    <div className="flex h-[17px] shrink-0 border border-l-0 border-black bg-white text-[10px] text-[#222]">
      <span className="flex w-[72px] items-center border-r border-black pl-px">Property</span>
      <span className="flex items-center pl-[2px]">Value</span>
    </div>
    <div className="flex-1 bg-white" />
  </aside>
);

const cells: [string, string, boolean?][] = [
  ['', 'w-[272px]'], ['802.5, 850.2', 'w-[167px]'], ['', 'w-[85px]'], ['Snap', 'w-[30px]', true], ['Ortho', 'w-[32px]', true], ['FreeHand', 'w-[51px]'],
  ['Verify Points', 'w-[65px]'], ['', 'w-[129px]'], ['\\Storages\\Local\\Jobs\\', 'w-[102px]'], ['AutoScroll', 'w-[55px]', true],
];
const StatusBar = () => (
  <footer className="flex h-[21px] shrink-0 border-t border-[#3f5f7e] bg-[linear-gradient(#d9eafc_0%,#c3dcf8_40%,#a9cdf4_50%,#c0dcf9_100%)] font-['Liberation_Sans',sans-serif] text-[10px] text-[#27497c]">
    {cells.map(([t, w, on], k) => (
      <span key={k} className={`${w} flex shrink-0 items-center border-r border-[#7fa1c9] pb-px whitespace-nowrap ${on ? 'justify-center bg-[linear-gradient(#9dbfe8,#6f9fd8_55%,#8db7e8)]' : 'pl-[3px]'}`}>{t}</span>
    ))}
    <span className="flex flex-1 items-center justify-end pr-px pb-px whitespace-nowrap">Network Status: Disconnected</span>
  </footer>
);

export default function App() {
  return (
    <div className="flex h-[720px] w-[1280px] justify-center overflow-hidden bg-black font-['Noto_Sans',sans-serif] text-[10px]">
      <div className="flex w-[1150px] flex-col overflow-hidden bg-[#e3e3e3]">
        <div className="h-[22px] shrink-0 border-b border-[#7d8990] bg-[#cbcbcb]" />
        <TitleBar />
        <Ribbon />
        <div className="flex h-[564px] shrink-0">
          <LeftPanel />
          <Splitter w="w-[7px]" />
          <Canvas />
          <Splitter w="w-[8px]" />
          <RightPanel />
        </div>
        <StatusBar />
      </div>
    </div>
  );
}
